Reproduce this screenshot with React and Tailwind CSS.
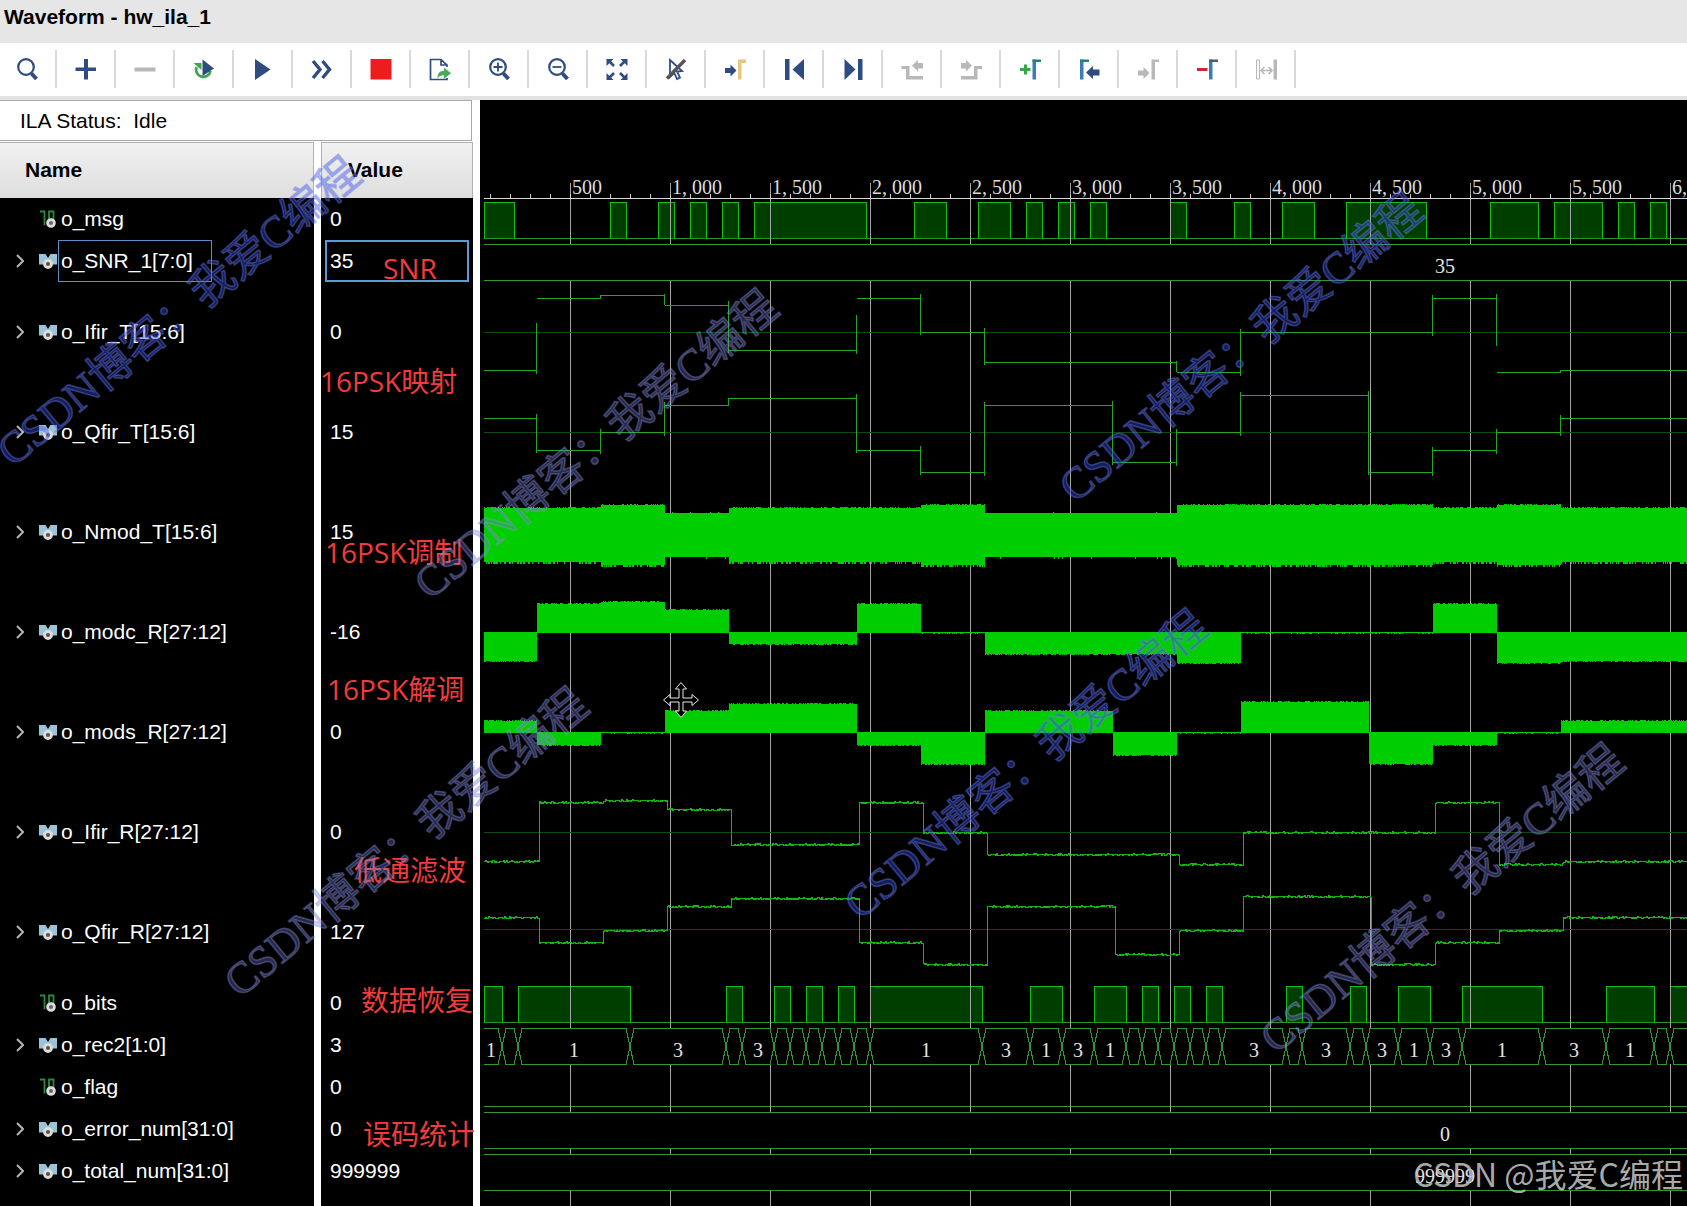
import { useState } from 'react';
import clsx from 'clsx';

const NAVY = '#2f4c80';
const GRAY = '#b8b8b8';

const Magnifier = ({ children }) => (
  <g fill="none" stroke={NAVY}>
    <circle cx="10" cy="9" r="7.8" strokeWidth="2.2" />
    <path d="M15.5 15.5l5 5.5" strokeWidth="4" />
    {children}
  </g>
);

const RightArrow = ({ fill, y = 12.5 }) => (
  <path fill={fill} transform={`translate(1 ${y - 6})`} d="M0 3.5h5.5V0L11.5 6l-6 6V8.5H0z" />
);

const TOOLS = [
  { label: 'Search', icon: <Magnifier /> },
  { label: 'Add', icon: <path d="M9 1h4v8.5h8v3.5h-8v8.500H9V13H.5V9.500H9z" fill={NAVY} /> },
  { label: 'Remove', icon: <path d="M.5 9.500h21v4H.5z" fill={GRAY} />, disabled: true },
  {
    label: 'Toggle auto re-trigger',
    icon: (
      <>
        <path d="M3.500 9a7.300 7.300 0 1 0 14 4" fill="none" stroke="#3fa650" strokeWidth="2.800" />
        <path d="M.5 5h8v7L5.500 9.500z" fill="#3fa650" />
        <path d="M9.500 1.500L21 10.500 9.500 18z" fill={NAVY} />
      </>
    ),
  },
  { label: 'Run trigger', icon: <path d="M3 1l15.500 10.500L3 22z" fill={NAVY} /> },
  {
    label: 'Run trigger immediate',
    icon: <path d="M2 3l7 8.500L2 20M11.500 3l7 8.500-7 8.500" fill="none" stroke={NAVY} strokeWidth="3.4" />,
  },
  { label: 'Stop trigger', icon: <path d="M.5 1h21v20.500H.5z" fill="#ee1c1c" /> },
  {
    label: 'Export ILA data',
    icon: (
      <>
        <path d="M18 9V7l-6-5.500H1.500v20H18v-1.500M12 1.500V7h6" fill="none" stroke={NAVY} strokeWidth="1.700" />
        <path d="M8.500 20.500c0-5 2-7.500 6.500-7.700V9.500l7 5.700-7 5.500v-3.500c-3 0-5 .8-6.500 3.300z" fill="#49ab57" />
      </>
    ),
  },
  { label: 'Zoom in', icon: <Magnifier><path d="M10 4.500v9M5.500 9h9" strokeWidth="1.800" /></Magnifier> },
  { label: 'Zoom out', icon: <Magnifier><path d="M5.500 9h9" strokeWidth="1.800" /></Magnifier> },
  {
    label: 'Zoom fit',
    icon: (
      <>
        <path d="M2 2l6 6M20 2l-6 6M2 21l6-6M20 21l-6-6" stroke={NAVY} strokeWidth="2.600" />
        <path d="M.5 1h7l-7 7zM21.500 1v7l-7-7zM.5 22v-7l7 7zM21.500 22h-7l7-7z" fill={NAVY} />
      </>
    ),
  },
  {
    label: 'Select',
    icon: (
      <>
        <path d="M5 2l12 11-5 .5 3 6-3 1.500-2.700-6L5 19z" fill="none" stroke={NAVY} strokeWidth="1.800" />
        <path d="M20 2L2 20.500" stroke="#555" strokeWidth="3.400" />
      </>
    ),
  },
  {
    label: 'Go to cursor',
    icon: (
      <>
        <RightArrow fill={NAVY} />
        <path d="M14 1.500h8V5h-4.500v16.500H14z" fill="#e2c878" />
      </>
    ),
  },
  { label: 'Go to start', icon: <path d="M2 1h4.500v21H2zM21 1v21L9.500 11.500z" fill={NAVY} /> },
  { label: 'Go to end', icon: <path d="M16 1h4.500v21H16zM2.500 1v21L13.500 11.500z" fill={NAVY} /> },
  {
    label: 'Previous transition',
    icon: <path d="M.5 8h8v10H22v3.500H5V11H.5zM11 7.500l6-5.500v3h5v5.500h-5v3z" fill={GRAY} />,
    disabled: true,
  },
  {
    label: 'Next transition',
    icon: <path d="M22 8h-8v10H1v3.500h16.500V11H22zM12 7.500L6 2v3H1v5.500h5v3z" fill={GRAY} />,
    disabled: true,
  },
  {
    label: 'Add marker',
    icon: (
      <>
        <path d="M5 6.500h3V10h3.500v3H8v3.500H5V13H1v-3h4z" fill="#35a84c" />
        <path d="M13.500 1.500H17v20h-3.500z" fill="#3b7dae" />
        <path d="M13.500 1.500h8.500V4h-8.500z" fill="#23808a" />
      </>
    ),
  },
  {
    label: 'Previous marker',
    icon: (
      <>
        <path d="M2 1.500h3.500v20H2z" fill="#3b7dae" />
        <path d="M2 1.500h9V4H2z" fill="#23808a" />
        <path d="M8 14.500l7-6.500v3.500h6.500v6H15V21z" fill={NAVY} />
      </>
    ),
  },
  {
    label: 'Next marker',
    icon: (
      <>
        <RightArrow fill={GRAY} y={15} />
        <path d="M14.500 1.500H22V4h-4v17.500h-3.500z" fill={GRAY} />
      </>
    ),
    disabled: true,
  },
  {
    label: 'Remove marker',
    icon: (
      <>
        <path d="M1 10h10.500v3H1z" fill="#d3262c" />
        <path d="M13 1.500h3.500v20H13z" fill="#3b7dae" />
        <path d="M13 1.500h9V4h-9z" fill="#46617a" />
      </>
    ),
  },
  {
    label: 'Swap markers',
    icon: (
      <>
        <path d="M1.500 2h3v19h-3z" fill="none" stroke={GRAY} />
        <path d="M18.500 1.500H22v20h-3.500z" fill={GRAY} />
        <path d="M6 12.500h11M9.500 9l-3.500 3.500L9.500 16M13.500 9l3.500 3.500-3.500 3.500" fill="none" stroke={GRAY} strokeWidth="1.600" />
      </>
    ),
    disabled: true,
  },
];

const SIGNALS = [
  { name: 'o_msg', value: '0' },
  { name: 'o_SNR_1[7:0]', value: '35', bus: true },
  { name: 'o_Ifir_T[15:6]', value: '0', bus: true, analog: true },
  { name: 'o_Qfir_T[15:6]', value: '15', bus: true, analog: true },
  { name: 'o_Nmod_T[15:6]', value: '15', bus: true, analog: true },
  { name: 'o_modc_R[27:12]', value: '-16', bus: true, analog: true },
  { name: 'o_mods_R[27:12]', value: '0', bus: true, analog: true },
  { name: 'o_Ifir_R[27:12]', value: '0', bus: true, analog: true },
  { name: 'o_Qfir_R[27:12]', value: '127', bus: true, analog: true },
  { name: 'o_bits', value: '0' },
  { name: 'o_rec2[1:0]', value: '3', bus: true },
  { name: 'o_flag', value: '0' },
  { name: 'o_error_num[31:0]', value: '0', bus: true },
  { name: 'o_total_num[31:0]', value: '999999', bus: true },
];

// Trace geometry, in px of the chart panel
const START = 4;
const END = 2400;
const FIRST_SYMBOL = 57;
const SYMBOL = 64;

// [start, end] of every high pulse
const MSG = [
  [4, 34], [130, 146], [178, 194], [210, 226], [242, 258], [274, 386], [434, 466], [498, 530],
  [546, 562], [578, 594], [610, 626], [690, 706], [754, 770], [802, 834], [866, 946],
  [1010, 1058], [1074, 1122], [1138, 1154], [1170, 1186],
];
const BITS = [
  [4, 22], [38, 150], [246, 262], [294, 310], [326, 342], [358, 374], [390, 502], [550, 582],
  [614, 646], [662, 678], [694, 710], [726, 742], [806, 822], [870, 886], [918, 950],
  [982, 1062], [1126, 1174], [1190, END],
];

// [symbols, level] runs, the first one is cut by the left edge
const IFIR_T = [[0, 270], [1, 198], [1, 195], [1, 205], [2, 250], [1, 198], [1, 232], [3, 262], [1, 272], [3, 232], [1, 198], [1, 272], [14, 270]];
const QFIR_T = [[0, 318], [1, 350], [1, 332], [1, 305], [2, 298], [1, 350], [1, 372], [2, 305], [1, 362], [1, 332], [2, 295], [1, 372], [1, 350], [1, 332], [14, 318]];
const NMOD = [[0, 27], [1, 27], [1, 30], [1, 22], [3, 27], [1, 30], [3, 22], [4, 30], [1, 27], [1, 30], [14, 27]];
const MODC = [[0, 561], [1, 504], [1, 502], [1, 510], [2, 544], [1, 504], [1, 532], [3, 554], [1, 563], [3, 532], [1, 504], [1, 563], [14, 561]];
const MODS = [[0, 621], [1, 645], [1, 633], [1, 611], [2, 604], [1, 645], [1, 664], [2, 611], [1, 655], [1, 633], [2, 602], [1, 664], [1, 645], [1, 633], [14, 621]];
const IFIR_R = [[0, 761], [1, 702], [1, 700], [1, 709], [2, 744], [1, 702], [1, 732], [3, 754], [1, 764], [3, 732], [1, 702], [1, 764], [14, 761]];
const QFIR_R = [[0, 817], [1, 842], [1, 830], [1, 806], [2, 798], [1, 842], [1, 864], [2, 806], [1, 854], [1, 830], [2, 796], [1, 864], [1, 842], [1, 830], [14, 817]];

const toSegments = (runs, shift = 0) => {
  let x = START;
  let symbols = 0;
  return runs.map(([count, level]) => {
    symbols += count;
    const from = x;
    x = FIRST_SYMBOL + shift + symbols * SYMBOL;
    return { from, to: x, level };
  });
};

const noise = (n) => {
  const v = Math.sin(n * 127.1 + 11.7) * 43758.5453;
  return v - Math.floor(v);
};

function stepPath(runs, gaps = {}) {
  const segs = toSegments(runs);
  return segs.map((s, i) => {
    const next = segs[i + 1];
    let d = `M${s.from} ${s.level + 0.5}H${s.to}`;
    if (next) {
      const dir = Math.sign(next.level - s.level);
      const small = Math.abs(next.level - s.level) < 12;
      d += `M${s.to - 0.5} ${s.level - dir * (small ? 1 : 4)}V${gaps[s.to] ?? next.level + dir * (small ? 0 : 3)}`;
    }
    return d;
  }).join('');
}

function noisyPath(runs) {
  let d = '';
  toSegments(runs, 2).forEach((s) => {
    for (let x = s.from; x < s.to; x++) {
      const n = noise(x + s.level);
      const y = s.level + 0.5 + (n > 0.7 ? 1 : 0) - (n < 0.12 ? 1 : 0);
      d += d ? `H${x + 0.5}V${y}` : `M${x} ${y}`;
    }
  });
  return d;
}

function blockPath(runs, base) {
  let d = '';
  toSegments(runs).forEach((s) => {
    const up = s.level < base;
    const flat = Math.abs(s.level - base) < 3;
    const origin = up ? base + 1 : base;
    for (let x = s.from; x < s.to; x++) {
      const n = noise(x * 3 + base);
      if (flat) {
        d += `M${x} ${base}h1v${n > 0.75 ? 2 : 1}h-1z`;
      } else {
        const edge = s.level + (up ? -1 : 1) * (n > 0.55 ? 1 : 0);
        d += `M${x} ${origin}h1V${edge}h-1z`;
      }
    }
  });
  return d;
}

function carrierPath() {
  let d = '';
  toSegments(NMOD).forEach((s) => {
    for (let x = s.from; x < s.to; x++) {
      const quiet = s.level === 22;
      const top = 435 - s.level - (noise(x) > (quiet ? 0.96 : 0.6) ? 1 : 0);
      const bottom = 435 + s.level + (noise(x + 0.5) > (quiet ? 0.96 : 0.6) ? 2 : 0);
      d += `M${x} ${top}h1V${bottom}h-1z`;
    }
  });
  return d;
}

const PulseTrace = ({ pulses, top }) => {
  const bottom = top + 36;
  return (
    <>
      <path d={`M${START} ${bottom + 0.5}H${END}`} stroke="#229a22" />
      {pulses.map(([a, b]) => (
        <path
          key={a}
          d={`M${a + 0.5} ${bottom}V${top + 0.5}H${b + 0.5}V${bottom}`}
          fill="#003e00"
          stroke="#12c012"
        />
      ))}
    </>
  );
};

// Value 1 while the bit is high, 3 while it is low
const BUS_CELLS = BITS.flatMap(([a, b], i) => {
  const next = BITS[i + 1];
  return next ? [{ from: a, to: b, value: 1 }, { from: b, to: next[0], value: 3 }] : [{ from: a, to: b }];
});

const CODE = "font-['Liberation_Serif',serif] text-xl";

const BusTrace = () => (
  <>
    <rect x={START} y="928" width={END} height="36" fill="#000" />
    {BUS_CELLS.map(({ from, to, value }, i) => {
      const l = i ? from + 4 : from;
      return (
        <g key={from}>
          <path
            d={`M${i ? from - 4 : from} 964.5${i ? `L${from + 4} 928.500` : 'M4 928.500'}H${to - 4}L${to + 4} 964.500M${l} 964.500H${to - 4}`}
            fill="none"
            stroke="#329632"
          />
          {value && to - from > 16 && (
            <text x={(l + to - 4) / 2} y="957" textAnchor="middle" fill="#e4e4e4" className={CODE}>{value}</text>
          )}
        </g>
      );
    })}
  </>
);

const ConstantBus = ({ top, value }) => (
  <>
    <rect x={START} y={top} width={END} height="36" fill="#000" />
    <path d={`M${START} ${top + 0.5}H${END}M${START} ${top + 36.5}H${END}`} stroke="#329632" />
    <text x="965" y={top + 29} textAnchor="middle" fill="#e4e4e4" className={CODE}>{value}</text>
  </>
);

const TICKS = Array.from({ length: 100 }, (_, i) => i * 20 + 10);
const MAJORS = Array.from({ length: 12 }, (_, i) => ({ x: 90 + i * 100, time: (i + 1) * 500 }));

const formatTime = (t) => (t < 1000 ? `${t}` : `${Math.floor(t / 1000)}, ${String(t % 1000).padStart(3, '0')}`);

function WaveChart() {
  return (
    <svg className="block h-[1106px] w-full overflow-hidden" role="img" aria-label="Waveform" shapeRendering="crispEdges">
      <PulseTrace pulses={MSG} top={102} />
      <PulseTrace pulses={BITS} top={886} />
      <path d={`M${START} 1006.500H${END}`} stroke="#329632" />

      <path d={MAJORS.map(({ x }) => `M${x + 0.5} 83V1106`).join('')} stroke="#a6a6a6" />
      <path d={TICKS.map((x) => `M${x + 0.5} 94v5`).join('')} stroke="#d0d0d0" />
      <path d={`M${START} 98.500H${END}`} stroke="#d8d8d8" />
      {MAJORS.map(({ x, time }) => (
        <text key={time} x={x + 2} y="94" fill="#dcdcdc" className={CODE}>{formatTime(time)}</text>
      ))}

      <ConstantBus top={144} value="35" />
      <BusTrace />
      <ConstantBus top={1012} value="0" />
      <ConstantBus top={1054} value="999999" />

      <path d={[232, 332, 732, 829].map((y) => `M${START} ${y + 0.5}H${END}`).join('')} stroke="#0f4a0f" />
      <path d={stepPath(IFIR_T, { 57: 223, 377: 215, 1017: 246 })} fill="none" stroke="#22a822" />
      <path d={stepPath(QFIR_T)} fill="none" stroke="#22a822" />
      <path d={carrierPath()} fill="#00ce00" />
      <path d={blockPath(MODC, 532)} fill="#00ce00" />
      <path d={blockPath(MODS, 632)} fill="#00ce00" />
      <path d={noisyPath(IFIR_R)} fill="none" stroke="#14b814" />
      <path d={noisyPath(QFIR_R)} fill="none" stroke="#14b814" />

      {/* move pointer */}
      <path
        transform="translate(201 600)"
        d="M-2-2V-11H-5.500L0-17.500 5.500-11H2V-2H11V-5.500L17.500 0 11 5.500V2H2V11H5.500L0 17.500-5.500 11H-2V2H-11V5.500L-17.500 0-11-5.500V-2Z"
        fill="#000"
        stroke="#e8e8e8"
        shapeRendering="auto"
      />
    </svg>
  );
}

const BitIcon = () => (
  <svg width="18" height="18" viewBox="0 0 18 18" aria-hidden="true">
    <path d="M1 1.500h4.500v14M10 16V1.500h4.500V10" fill="none" stroke="#2c8a40" strokeWidth="1.800" />
    <circle cx="12" cy="13" r="3.400" fill="#666" stroke="#dcdcdc" strokeWidth="2.800" />
  </svg>
);

const BusIcon = () => (
  <svg width="18" height="18" viewBox="0 0 18 18" aria-hidden="true">
    <path d="M0 2h6.500L9 6l2.500-4H18v10.500H0z" fill="#9cc4d8" />
    <circle cx="9" cy="12" r="3.500" fill="#555" stroke="#e0dcd8" strokeWidth="2.800" />
  </svg>
);

const Expander = ({ name }) => (
  <button type="button" aria-label={`Expand ${name}`} className="block w-2">
    <svg width="8" height="14" viewBox="0 0 8 14">
      <path d="M1 1l6 6-6 6" fill="none" stroke="#b4b4b4" strokeWidth="2" />
    </svg>
  </button>
);

const NOTES = [
  { text: 'SNR', pos: 'left-[383px] top-[148px]' },
  { text: '16PSK映射', pos: 'left-[320px] top-[261px]' },
  { text: '16PSK调制', pos: 'left-[325px] top-[432px]' },
  { text: '16PSK解调', pos: 'left-[327px] top-[569px]' },
  { text: '低通滤波', pos: 'left-[354px] top-[750px]' },
  { text: '数据恢复', pos: 'left-[361px] top-[880px]' },
  { text: '误码统计', pos: 'left-[363px] top-[1014px]' },
];

const STAMPS = [
  { x: 179, y: 312, faint: false },
  { x: 596, y: 445, faint: true },
  { x: 1241, y: 348, faint: false },
  { x: 406, y: 843, faint: true },
  { x: 1026, y: 765, faint: false },
  { x: 1442, y: 899, faint: true },
];

function Stamps() {
  return (
    <svg className="pointer-events-none absolute inset-0 size-full overflow-hidden">
      {STAMPS.map(({ x, y, faint }) => (
        <text
          key={`${x}-${y}`}
          transform={`translate(${x} ${y}) rotate(-39.5)`}
          textAnchor="middle"
          dominantBaseline="central"
          fill={faint ? '#7078e0' : '#3048f0'}
          fillOpacity={faint ? 0.36 : 0.42}
          stroke={faint ? '#9094d0' : '#7c88e0'}
          strokeOpacity="0.4"
          strokeWidth="1.500"
          className="font-['Liberation_Serif','Noto_Sans_CJK_SC',serif] text-[44px]"
        >
          CSDN博客：我爱C编程
        </text>
      ))}
    </svg>
  );
}

export default function App() {
  const [selected, setSelected] = useState('o_SNR_1[7:0]');

  return (
    <div className="relative flex min-h-screen flex-col overflow-hidden bg-white font-['Liberation_Sans',Arial,sans-serif] text-[21px] text-black">
      <h1 className="h-[43px] bg-[#e6e6e6] pt-[5px] pl-1 text-[21px] leading-6 font-bold">Waveform - hw_ila_1</h1>

      <div role="toolbar" aria-label="Waveform tools" className="flex border-b-4 border-[#e2e2e2] pt-[7px] pb-2">
        {TOOLS.map(({ label, icon, disabled }) => (
          <button
            key={label}
            type="button"
            aria-label={label}
            disabled={disabled}
            className="flex h-[38px] w-[59px] shrink-0 items-center justify-center border-r-2 border-[#d9d9d9] first:w-[57px] first:pr-0.5"
          >
            <svg width="22" height="23" viewBox="0 0 22 23" aria-hidden="true">{icon}</svg>
          </button>
        ))}
      </div>

      <div className="relative flex flex-1">
        <div className="flex w-[480px] shrink-0 flex-col pr-[7px]">
          <p className="mb-px mr-px h-[41px] border border-l-0 border-[#a8a8a8] pl-5 text-[21px] leading-[40px] whitespace-pre">
            ILA Status:  Idle
          </p>
          <table className="w-full flex-1 table-fixed border-separate border-spacing-0">
            <colgroup>
              <col className="w-[321px]" />
              <col />
            </colgroup>
            <thead>
              <tr className="text-left">
                <th className="border-r-[7px] border-white p-0">
                  <div className="h-14 border-t border-r border-[#b0b0b0] bg-linear-to-b from-[#f1f1f1] to-[#dedede] pl-[25px] leading-[54px]">Name</div>
                </th>
                <th className="p-0">
                  <div className="h-14 border border-b-0 border-[#b0b0b0] bg-linear-to-b from-[#f1f1f1] to-[#dedede] pl-[26px] leading-[54px]">Value</div>
                </th>
              </tr>
            </thead>
            <tbody className="bg-black text-white">
              {SIGNALS.map(({ name, value, bus, analog }) => {
                const active = selected === name;
                return (
                  <tr key={name} className={analog ? 'h-[100px]' : 'h-[42px]'} onClick={() => setSelected(name)}>
                    <td className="border-r-[7px] border-white p-0">
                      <div className="flex items-center pl-4">
                        <span className="w-[23px]">{bus && <Expander name={name} />}</span>
                        {bus ? <BusIcon /> : <BitIcon />}
                        <span
                          className={clsx(
                            'ml-px flex h-[42px] items-center border pr-[18px] pl-0.5',
                            active ? 'border-[#5f8fc8]' : 'border-transparent',
                          )}
                        >
                          {name}
                        </span>
                      </div>
                    </td>
                    <td className="p-0">
                      <div
                        className={clsx(
                          'mr-1 ml-1 flex h-[42px] items-center border-2 pl-[3px]',
                          active ? 'border-[#5b9bd5]' : 'border-transparent',
                        )}
                      >
                        {value}
                      </div>
                    </td>
                  </tr>
                );
              })}
              <tr aria-hidden="true">
                <td className="h-[14px] border-r-[7px] border-white p-0" />
                <td className="p-0" />
              </tr>
            </tbody>
          </table>
        </div>

        <div className="min-w-0 flex-1 bg-black">
          <WaveChart />
        </div>

        {NOTES.map(({ text, pos }) => (
          <span
            key={text}
            className={clsx(
              "absolute font-['Open_Sans','Noto_Sans_CJK_SC',sans-serif] text-[28px] leading-10 whitespace-nowrap text-[#f03c3c]",
              pos,
            )}
          >
            {text}
          </span>
        ))}
      </div>

      <Stamps />
      <span className="absolute right-1 bottom-[10px] font-['Noto_Sans_CJK_SC',sans-serif] text-[32px] leading-[46px] text-[#c0c0c0]/90">
        CSDN @我爱C编程
      </span>
    </div>
  );
}
